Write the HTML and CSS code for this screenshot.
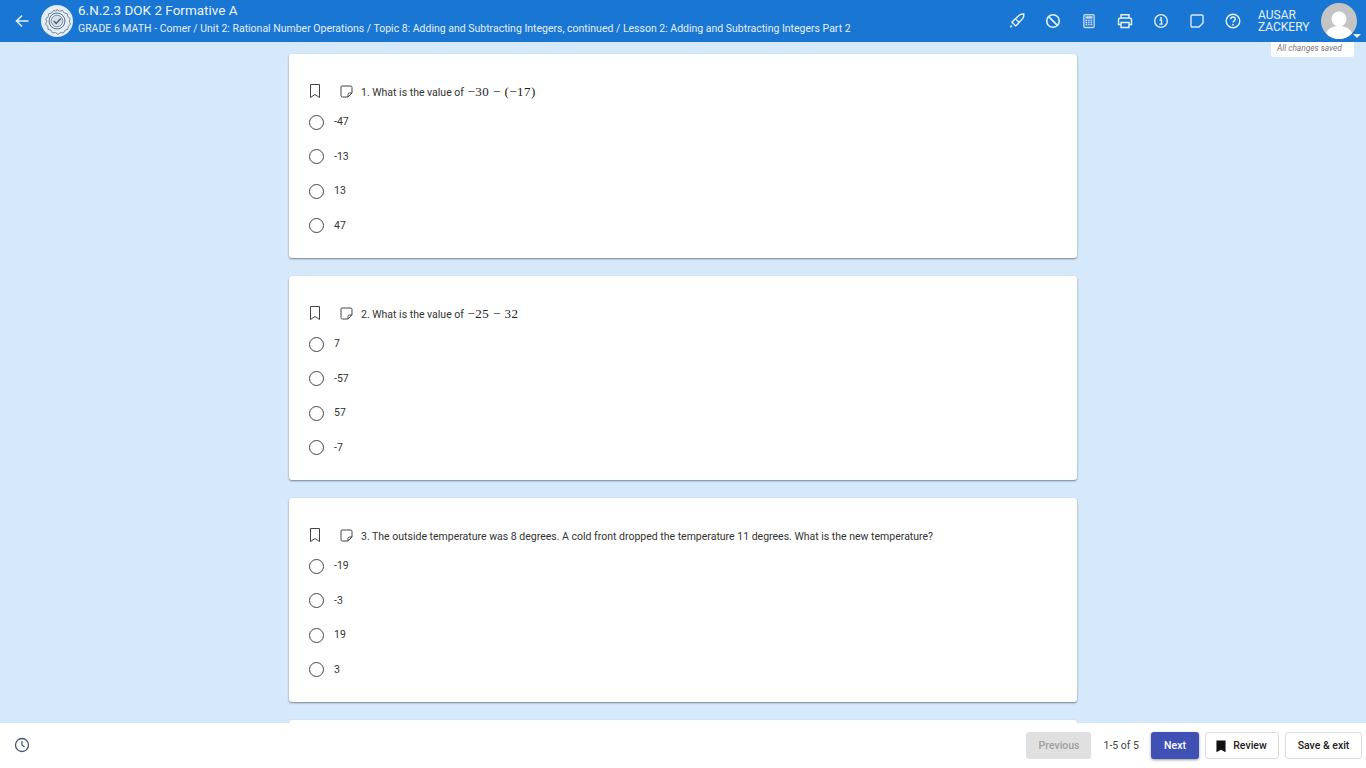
FILE: index.html
```html
<!DOCTYPE html>
<html lang="en">
<head>
<meta charset="utf-8">
<title>6.N.2.3 DOK 2 Formative A</title>
<link rel="stylesheet" href="styles.css">
</head>
<body>
<div class="app">
  <header class="topbar">
    <svg class="back" viewBox="0 0 16 16" width="16" height="16"><path d="M14.5 8H2.500M8 2.500 2.500 8 8 13.500" fill="none" stroke="#e3f0fb" stroke-width="1.600"/></svg>
    <span class="logo">
      <svg viewBox="0 0 32 32" width="32" height="32">
        <circle cx="16" cy="16" r="16" fill="#e4edf6"/>
        <path d="M16 4.500l2.600 1.600 3-.6 1.700 2.500 3 .7.500 3 2.400 1.900-.9 2.900 1.200 2.800-2.300 2-.3 3-2.900.9-1.500 2.700-3-.3-2.500 1.800-2.500-1.800-3 .3-1.500-2.700-2.900-.9-.3-3-2.300-2 1.200-2.800-.9-2.900 2.400-1.900.5-3 3-.7 1.700-2.500 3 .6z" fill="none" stroke="#5b7287" stroke-width=".8"/>
        <circle cx="16" cy="16" r="8" fill="none" stroke="#5b7287" stroke-width="1"/>
        <circle cx="16" cy="16" r="5.800" fill="#d5e0ea" stroke="#5b7287" stroke-width=".7"/>
        <path d="M12.800 16l2.400 2.500 4.600-5" fill="none" stroke="#4a6175" stroke-width="1.400"/>
      </svg>
    </span>
    <div class="titles">
      <div class="title">6.N.2.3 DOK 2 Formative A</div>
      <div class="crumbs">GRADE 6 MATH - Comer / Unit 2: Rational Number Operations / Topic 8: Adding and Subtracting Integers, continued / Lesson 2: Adding and Subtracting Integers Part 2</div>
    </div>
    <div class="tools">
      <svg class="tool" viewBox="0 0 18 18"><path d="M2 16l.9-3.300 1.700 1.700z" fill="#eef5fc"/><path d="M4 10.300l3.600 3.600 1.300-1 5.800-6.500c.8-1.100 1.300-3 1-4.400-1.500-.2-3.400.4-4.500 1.300L5 9z" fill="none" stroke="#eef5fc" stroke-width="1.400"/><path d="M7.500 6.800l3.700 3.700" stroke="#eef5fc" stroke-width="1.200"/></svg>
      <svg class="tool" viewBox="0 0 18 18"><circle cx="9" cy="9" r="6.300" fill="none" stroke="#e8f2fb" stroke-width="1.600"/><path d="M4.600 4.600l8.800 8.800" stroke="#e8f2fb" stroke-width="1.600"/></svg>
      <svg class="tool" viewBox="0 0 18 18"><rect x="3.800" y="2.600" width="10.400" height="13" rx="1.200" fill="#3f8ad8" stroke="#c4dcf3" stroke-width="1.200"/><rect x="5.600" y="4.400" width="6.800" height="2" fill="#d4e5f6"/><path d="M5.800 8.400h6.400M5.800 10.400h6.400M5.800 12.400h6.400" stroke="#e2eefa" stroke-width="1.100" stroke-dasharray="1.200 1.200"/></svg>
      <svg class="tool" viewBox="0 0 18 18"><path d="M5 6V2.800h8V6M5 12.500H2.500V8c0-1 .8-2 2-2h9c1.200 0 2 1 2 2v4.500H13" fill="none" stroke="#e8f2fb" stroke-width="1.400"/><path d="M5 10.500h8v5H5z" fill="none" stroke="#e8f2fb" stroke-width="1.400"/></svg>
      <svg class="tool" viewBox="0 0 18 18"><circle cx="9" cy="9" r="6.300" fill="none" stroke="#e8f2fb" stroke-width="1.300"/><circle cx="9" cy="5.900" r="1" fill="#e8f2fb"/><path d="M7.500 8h2v4M7.300 12.200h3.400" fill="none" stroke="#e8f2fb" stroke-width="1.300"/></svg>
      <svg class="tool" viewBox="0 0 18 18"><path d="M4.200 3h9.600A1.200 1.200 0 0 1 15 4.200V11l-4 4H4.200A1.200 1.200 0 0 1 3 13.800V4.200A1.200 1.200 0 0 1 4.200 3z" fill="none" stroke="#dbe9f7" stroke-width="1.400"/></svg>
      <svg class="tool" viewBox="0 0 18 18"><circle cx="9" cy="9" r="6.800" fill="none" stroke="#e8f2fb" stroke-width="1.400"/><path d="M6.700 7.200c0-1.300 1-2.200 2.300-2.200s2.300.9 2.300 2.100c0 1.700-2.300 1.800-2.300 3.500" fill="none" stroke="#e8f2fb" stroke-width="1.400"/><circle cx="9" cy="12.700" r=".9" fill="#e8f2fb"/></svg>
    </div>
    <div class="user">AUSAR<br>ZACKERY</div>
    <span class="avatar">
      <svg viewBox="0 0 36 36" width="36" height="36"><circle cx="18" cy="18" r="18" fill="#c4c4c4"/><circle cx="18" cy="16" r="7.500" fill="#fff"/><path d="M5 30.500c2-5.500 7.500-7.500 13-7.500s11 2 13 7.500a18 18 0 0 1-26 0z" fill="#fff"/></svg>
    </span>
    <span class="caret"></span>
    <div class="saved">All changes saved</div>
  </header>

  <main class="content">
    <section class="card">
      <div class="question">
        <svg class="q-mark" viewBox="0 0 12 15"><path d="M1.500.5h9v13L6 10.500l-4.500 3z" fill="none" stroke="#444" stroke-width="1"/></svg>
        <svg class="q-note" viewBox="0 0 13 13"><path d="M2 1h9A1.500 1.500 0 0 1 12 2.500V8l-4 4H2.500A1.500 1.500 0 0 1 1 10.500V2A1 1 0 0 1 2 1zM8 12V9.500A1.500 1.500 0 0 1 9.500 8H12" fill="none" stroke="#444" stroke-width="1"/></svg>
        <p class="q-text">1. What is the value of <span class="math">−30 − (−17)</span></p>
      </div>
      <label class="option"><span class="radio"></span>-47</label>
      <label class="option"><span class="radio"></span>-13</label>
      <label class="option"><span class="radio"></span>13</label>
      <label class="option"><span class="radio"></span>47</label>
    </section>
    <section class="card">
      <div class="question">
        <svg class="q-mark" viewBox="0 0 12 15"><path d="M1.500.5h9v13L6 10.500l-4.500 3z" fill="none" stroke="#444" stroke-width="1"/></svg>
        <svg class="q-note" viewBox="0 0 13 13"><path d="M2 1h9A1.500 1.500 0 0 1 12 2.500V8l-4 4H2.500A1.500 1.500 0 0 1 1 10.500V2A1 1 0 0 1 2 1zM8 12V9.500A1.500 1.500 0 0 1 9.500 8H12" fill="none" stroke="#444" stroke-width="1"/></svg>
        <p class="q-text">2. What is the value of <span class="math">−25 − 32</span></p>
      </div>
      <label class="option"><span class="radio"></span>7</label>
      <label class="option"><span class="radio"></span>-57</label>
      <label class="option"><span class="radio"></span>57</label>
      <label class="option"><span class="radio"></span>-7</label>
    </section>
    <section class="card">
      <div class="question">
        <svg class="q-mark" viewBox="0 0 12 15"><path d="M1.500.5h9v13L6 10.500l-4.500 3z" fill="none" stroke="#444" stroke-width="1"/></svg>
        <svg class="q-note" viewBox="0 0 13 13"><path d="M2 1h9A1.500 1.500 0 0 1 12 2.500V8l-4 4H2.500A1.500 1.500 0 0 1 1 10.500V2A1 1 0 0 1 2 1zM8 12V9.500A1.500 1.500 0 0 1 9.500 8H12" fill="none" stroke="#444" stroke-width="1"/></svg>
        <p class="q-text">3. The outside temperature was 8 degrees. A cold front dropped the temperature 11 degrees. What is the new temperature?</p>
      </div>
      <label class="option"><span class="radio"></span>-19</label>
      <label class="option"><span class="radio"></span>-3</label>
      <label class="option"><span class="radio"></span>19</label>
      <label class="option"><span class="radio"></span>3</label>
    </section>
    <section class="card"></section>
  </main>

  <footer class="bottombar">
    <svg class="clock" viewBox="0 0 16 16" width="16" height="16"><circle cx="8" cy="8" r="6.500" fill="none" stroke="#3f5670" stroke-width="1.300"/><path d="M8 4v4.200l2.600 1.700" fill="none" stroke="#3f5670" stroke-width="1.200"/></svg>
    <button class="btn btn-disabled">Previous</button>
    <span class="count">1-5 of 5</span>
    <button class="btn btn-primary">Next</button>
    <button class="btn btn-outline"><svg viewBox="0 0 11 14" width="10" height="14"><path d="M.5 1h10v13L5.500 11 .5 14z" fill="#111"/></svg>Review</button>
    <button class="btn btn-outline">Save &amp; exit</button>
  </footer>
</div>
</body>
</html>
```
FILE: styles.css
```css
* { box-sizing: border-box; }
html, body { margin: 0; height: 100%; overflow: hidden; }
body { font-family: Roboto, "Liberation Sans", sans-serif; color: #333; background: #d6e9fb; }
.app { height: 100vh; display: flex; flex-direction: column; position: relative; }

.topbar { flex: 0 0 42px; background: #1976d2; color: #fff; display: flex; align-items: center; padding-left: 14px; position: relative; z-index: 2; }
.back { flex: none; }
.logo { flex: none; width: 32px; height: 32px; margin-left: 11px; }
.logo svg, .avatar svg { display: block; }
.titles { margin-left: 5px; flex: 1; min-width: 0; }
.title { font-size: 13.5px; line-height: 17px; margin-top: -4px; color: #eef5fc; }
.crumbs { font-size: 10.49px; line-height: 16px; margin-top: 2px; color: #e3eefa; white-space: nowrap; }
.tools { display: flex; gap: 18px; flex: none; margin-right: 2px; }
.tool { width: 18px; height: 18px; display: block; }
.user { font-size: 12px; line-height: 12px; margin-left: 14px; width: 63px; color: #e6f0fa; }
.avatar { flex: none; width: 36px; height: 36px; margin-right: 9px; }
.caret { position: absolute; left: 1353px; top: 34px; border: 4px solid transparent; border-top: 4px solid #e8f2fb; border-bottom: 0; }
.saved { position: absolute; left: 1271px; top: 42px; width: 83px; height: 15px; background: #fff; border-radius: 0 0 3px 3px; font-size: 8.3px; line-height: 13px; font-style: italic; color: #777; padding-left: 6px; }

.content { flex: 1; min-height: 0; overflow: hidden; padding-top: 12px; display: flex; flex-direction: column; align-items: center; gap: 18px; }
.card { flex: none; width: 788px; height: 204px; background: #fff; border-radius: 3px; box-shadow: 0 1px 2px rgba(0,0,0,.45); padding: 29px 20px 0; }
.question { display: flex; align-items: center; height: 18px; }
.q-mark { width: 12px; height: 15px; flex: none; margin-top: -2px; }
.q-note { width: 13px; height: 13px; flex: none; margin-left: 19px; margin-top: -2px; }
.q-text { margin: 2px 0 0 8px; font-size: 10.5px; line-height: 18px; color: #333; white-space: nowrap; }
.math { font-family: "Liberation Serif", serif; font-size: 13px; line-height: 0; letter-spacing: .45px; color: #222; margin-left: 1px; }
.option { display: flex; align-items: center; height: 34.5px; padding-bottom: .6px; font-size: 10.5px; color: #333; }
.question + .option { margin-top: 4px; }
.radio { flex: none; width: 15px; height: 15px; border: 1px solid #444; border-radius: 50%; margin: .6px 10px 0 0; background: #fff; }

.bottombar { flex: 0 0 45px; background: #fff; display: flex; align-items: center; padding: 0 4px 0 15px; position: relative; z-index: 2; }
.clock { margin-right: auto; margin-left: -1px; margin-top: -2px; }
.btn { font-family: inherit; font-size: 10.5px; font-weight: 500; height: 27px; border-radius: 3px; border: 0; padding: 0; display: flex; align-items: center; justify-content: center; gap: 7px; }
.btn-disabled { width: 65px; background: #e0e0e0; color: #a0a0a0; padding-left: 2px; }
.count { font-size: 10.5px; color: #444; margin: 0 12px 0 13px; }
.btn-primary { width: 48px; background: #3f51b5; color: #fff; box-shadow: 0 1px 3px rgba(0,0,0,.4); margin-right: 6px; }
.btn-outline { background: #fff; border: 1px solid #ddd; color: #222; width: 74px; margin-right: 6px; padding-right: 1px; }
.btn-outline:last-child { width: 77px; margin-right: 0; padding-right: 0; }
```
